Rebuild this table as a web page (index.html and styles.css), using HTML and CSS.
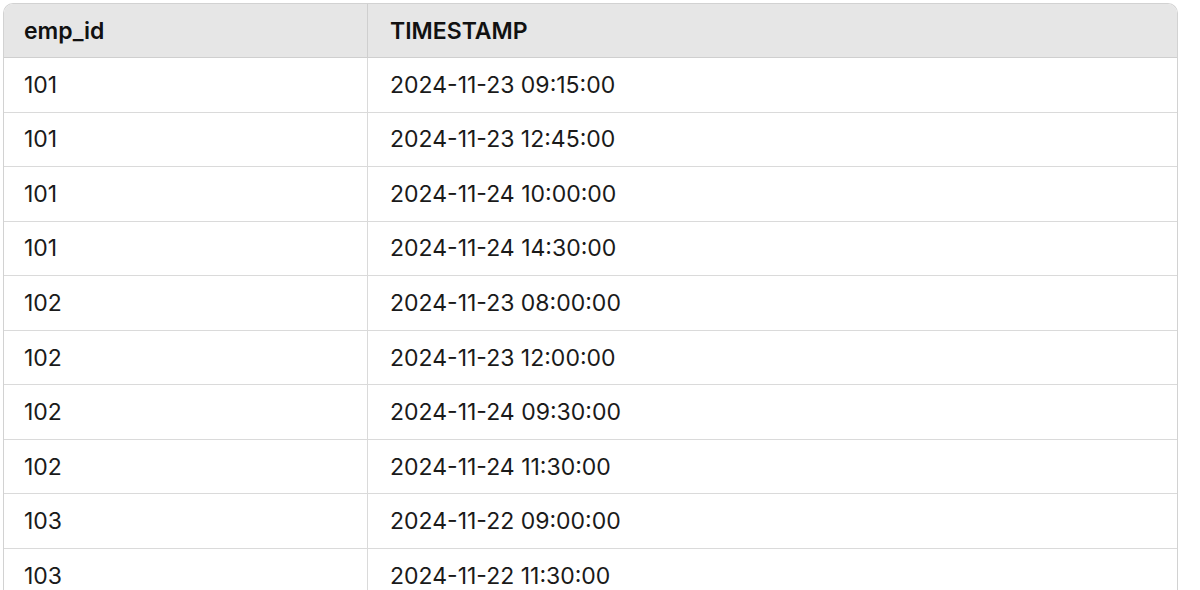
FILE: index.html
```html
<!DOCTYPE html>
<html>
<head>
<meta charset="utf-8">
<link rel="stylesheet" href="styles.css">
</head>
<body>
<div class="table">
  <div class="row head"><div class="cell c1">emp_id</div><div class="cell c2">TIMESTAMP</div></div>
  <div class="row"><div class="cell c1">101</div><div class="cell c2">2024-11-23 09:15:00</div></div>
  <div class="row"><div class="cell c1">101</div><div class="cell c2">2024-11-23 12:45:00</div></div>
  <div class="row"><div class="cell c1">101</div><div class="cell c2">2024-11-24 10:00:00</div></div>
  <div class="row"><div class="cell c1">101</div><div class="cell c2">2024-11-24 14:30:00</div></div>
  <div class="row"><div class="cell c1">102</div><div class="cell c2">2024-11-23 08:00:00</div></div>
  <div class="row"><div class="cell c1">102</div><div class="cell c2">2024-11-23 12:00:00</div></div>
  <div class="row"><div class="cell c1">102</div><div class="cell c2">2024-11-24 09:30:00</div></div>
  <div class="row"><div class="cell c1">102</div><div class="cell c2">2024-11-24 11:30:00</div></div>
  <div class="row"><div class="cell c1">103</div><div class="cell c2">2024-11-22 09:00:00</div></div>
  <div class="row"><div class="cell c1">103</div><div class="cell c2">2024-11-22 11:30:00</div></div>
</div>
</body>
</html>
```
FILE: styles.css
```css
html, body {
  margin: 0;
  padding: 0;
  background: #ffffff;
  overflow: hidden;
}
body {
  padding: 3px 0 0 3px;
  font-family: Inter, "Noto Sans", sans-serif;
  color: #1a1a1a;
}
.table {
  width: 1173px;
  border: 1px solid #d2d2d2;
  border-bottom: none;
  border-radius: 10px 10px 0 0;
  overflow: hidden;
}
.row {
  display: grid;
  grid-template-columns: 364px 1fr;
  height: 53.55px;
  border-bottom: 1px solid #dadada;
}
.row.head {
  background: #e6e6e6;
  height: 53px;
  border-bottom: 1px solid #cfcfcf;
}
.cell {
  display: flex;
  align-items: center;
  font-size: 23px;
}
.c1 {
  padding-left: 20px;
  border-right: 1px solid #dadada;
}
.c2 {
  padding-left: 22px;
}
.head .cell {
  font-weight: 600;
  color: #111111;
}
.head .c1 {
  border-right-color: #cfcfcf;
}
```
